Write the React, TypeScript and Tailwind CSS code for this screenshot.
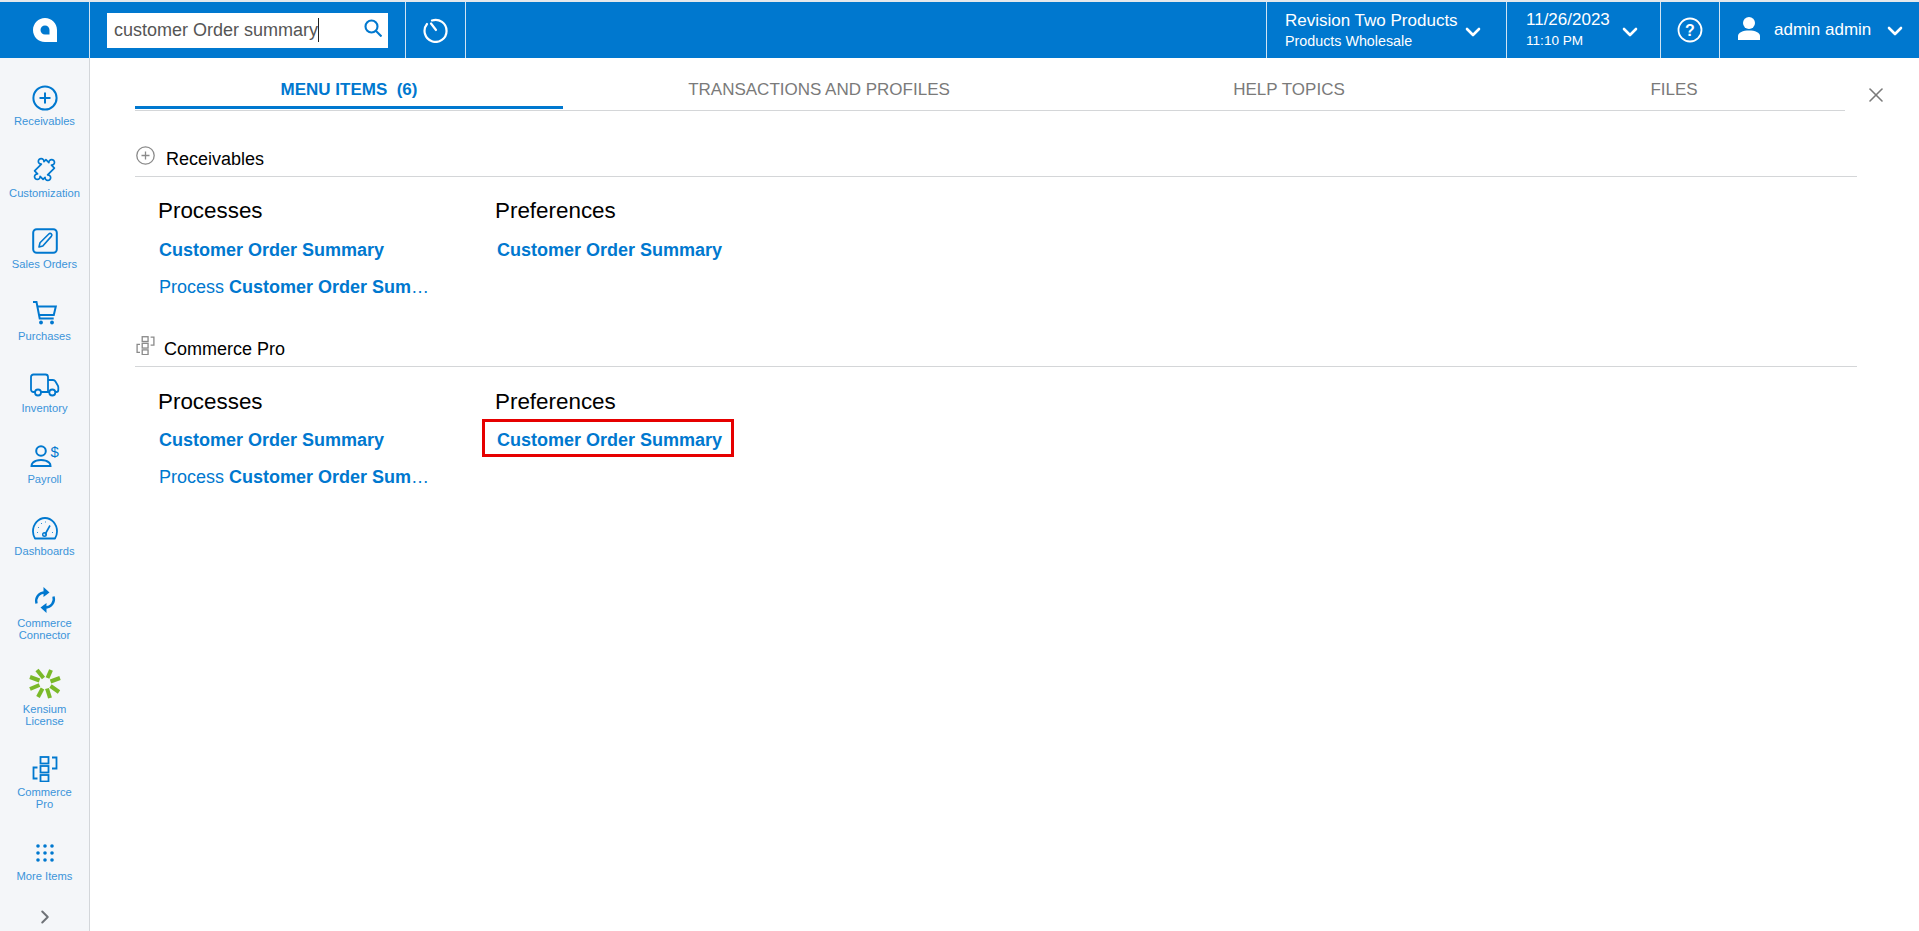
import { ChevronDown, ChevronRight, X } from 'lucide-react'
import type { ReactNode } from 'react'

const BLUE = '#0078cf'

function ReceivablesIcon() {
  return (
    <svg width="26" height="26" viewBox="0 0 26 26" fill="none" stroke={BLUE} strokeWidth="2">
      <circle cx="13" cy="13" r="11.6" />
      <path d="M13 7.5v11M7.5 13h11" />
    </svg>
  )
}

function PuzzleIcon() {
  return (
    <svg width="27" height="27" viewBox="-13.500 -13.500 27 27" fill="none" stroke={BLUE} strokeWidth="1.7" strokeLinejoin="round">
      <path
        transform="rotate(-45)"
        d="M-8-6H1.600a2.800 2.800 0 1 1 3.600 0H8V-1.800a2.800 2.800 0 1 1 0 3.600V6H-1.600a2.800 2.800 0 1 1-3.600 0H-8V1.800a2.800 2.800 0 1 1 0-3.600V-6Z"
      />
    </svg>
  )
}

function OrdersIcon() {
  return (
    <svg width="26" height="26" viewBox="0 0 26 26" fill="none" stroke={BLUE} strokeWidth="2" strokeLinejoin="round">
      <rect x="1.2" y="1.2" width="23.6" height="23.6" rx="3.5" />
      <path d="M7 19l1-4.2L16.8 6c.8-.8 1.8-.8 2.5-.1.8.8.7 1.8 0 2.5L10.8 18z" strokeWidth="1.6" />
    </svg>
  )
}

function CartIcon() {
  return (
    <svg width="26" height="26" viewBox="0 0 26 26" fill="none" stroke={BLUE} strokeWidth="2">
      <path d="M1 2h3.5l3.2 16.5h14" />
      <path d="M5.3 6.5h18.5l-2 8.5H7" />
      <circle cx="9" cy="22.5" r="1.9" fill={BLUE} stroke="none" />
      <circle cx="20" cy="22.5" r="1.9" fill={BLUE} stroke="none" />
    </svg>
  )
}

function TruckIcon() {
  return (
    <svg width="30" height="24" viewBox="0 0 30 24" fill="none" stroke={BLUE} strokeWidth="1.8" strokeLinejoin="round">
      <path d="M5 19H3.5C2 19 1 18 1 16.5V4C1 2.500 2 1.500 3.500 1.500H15.500C17 1.500 18 2.500 18 4V19H11" />
      <path d="M18 7h5c1 0 1.800.500 2.300 1.300l2.500 4.200c.300.600.500 1.100.500 1.800v2.700c0 1.200-.800 2-2 2H25M18 19h1.500" />
      <circle cx="8" cy="19.500" r="3" />
      <circle cx="22.300" cy="19.500" r="3" />
    </svg>
  )
}

function PayrollIcon() {
  return (
    <svg width="30" height="24" viewBox="0 0 30 24" fill="none" stroke={BLUE} strokeWidth="2">
      <circle cx="11" cy="7" r="4.800" />
      <path d="M1.500 22c0-1 .200-2.500 1.500-3.600C5 16.700 8 16 11 16s6 .700 8 2.400c1.300 1.100 1.500 2.600 1.500 3.600z" />
      <text x="20.500" y="13" fontSize="15" fill={BLUE} stroke="none" fontFamily="'Liberation Sans', sans-serif">$</text>
    </svg>
  )
}

function GaugeIcon() {
  return (
    <svg width="26" height="24" viewBox="0 0 26 24" fill="none" stroke={BLUE} strokeWidth="1.800">
      <path d="M3 22.500C1.700 20.500 1 18.500 1 15.500 1 8 6.500 2 13 2s12 6 12 13.500c0 3-.700 5-2 7z" strokeLinejoin="round" />
      <path d="M13 18.500 18 9.500" strokeWidth="1.600" />
      <circle cx="12.500" cy="18.500" r="1.800" strokeWidth="1.400" />
      <path d="M5 16.500h.8M6 11.500h.8M9 7.500h.8M13 6h.8M20 16.500h.8" strokeWidth="1.200" strokeDasharray="1 1" />
    </svg>
  )
}

function ConnectorIcon() {
  return (
    <svg width="22" height="28" viewBox="0 0 22 28" fill="none" stroke={BLUE} strokeWidth="2.400">
      <path d="M2.500 17.500C1 12 4.500 6.500 11 6.500" />
      <path d="M19.500 10.500C21 16 17.500 21.500 11 21.500" />
      <path d="M9.500 1 15.500 6.500 9.500 11z" fill={BLUE} stroke="none" />
      <path d="M12.500 17 6.500 21.500 12.500 27z" fill={BLUE} stroke="none" />
    </svg>
  )
}

function KensiumIcon() {
  return (
    <svg width="32" height="32" viewBox="-16 -16 32 32" fill="none" stroke="#7ab929" strokeWidth="4">
      <path d="M-8-13-1.500-5" />
      <path d="M6-13 2.500-5" />
      <path d="M15-5 5.500-1.500" />
      <path d="M14 9 5.500 3" />
      <path d="M5 15 2 5.500" />
      <path d="M-7 14-2.500 5.500" />
      <path d="M-15 6-5.500 2" />
      <path d="M-15-6-5.500-2.500" />
    </svg>
  )
}

function CommerceIcon({ color = BLUE, size = 26 }: { color?: string; size?: number }) {
  return (
    <svg width={size} height={size} viewBox="0 0 26 26" fill="none" stroke={color} strokeWidth="1.800">
      <rect x="8.500" y="1" width="8" height="6.500" />
      <rect x="8.500" y="10" width="8" height="6.500" />
      <rect x="8.500" y="19" width="8" height="6.500" />
      <path d="M20 1.500h4.500v11H20M5.500 11.500H1.500v11h4" />
    </svg>
  )
}

function DotsIcon() {
  const dots = [3, 10, 17]
  return (
    <svg width="20" height="20" viewBox="0 0 20 20" fill={BLUE}>
      {dots.map((y) =>
        dots.map((x) => <circle key={`${x}-${y}`} cx={x} cy={y} r="1.800" />)
      )}
    </svg>
  )
}

const NAV: { label: string[]; icon: ReactNode; h: string; gap: string }[] = [
  { label: ['Receivables'], icon: <ReceivablesIcon />, h: 'h-[71.7px]', gap: 'mt-[3px]' },
  { label: ['Customization'], icon: <PuzzleIcon />, h: 'h-[71.7px]', gap: 'mt-[3px]' },
  { label: ['Sales Orders'], icon: <OrdersIcon />, h: 'h-[71.7px]', gap: 'mt-[3px]' },
  { label: ['Purchases'], icon: <CartIcon />, h: 'h-[71.7px]', gap: 'mt-[3px]' },
  { label: ['Inventory'], icon: <TruckIcon />, h: 'h-[71.7px]', gap: 'mt-[3px]' },
  { label: ['Payroll'], icon: <PayrollIcon />, h: 'h-[71.7px]', gap: 'mt-[3px]' },
  { label: ['Dashboards'], icon: <GaugeIcon />, h: 'h-[71.7px]', gap: 'mt-[3px]' },
  { label: ['Commerce', 'Connector'], icon: <ConnectorIcon />, h: 'h-[83.5px]', gap: 'mt-[3px]' },
  { label: ['Kensium', 'License'], icon: <KensiumIcon />, h: 'h-[86px]', gap: 'mt-[6px]' },
  { label: ['Commerce', 'Pro'], icon: <CommerceIcon />, h: 'h-[84px]', gap: 'mt-[3px]' },
  { label: ['More Items'], icon: <DotsIcon />, h: 'h-[49px]', gap: 'mt-[3px]' },
]

function Sidebar() {
  return (
    <aside className="flex w-[90px] shrink-0 flex-col items-stretch border-r border-[#d3d6da] bg-[#f4f6f9] pt-[26px]">
      {NAV.map((item) => (
        <div key={item.label.join(' ')} className={`flex flex-col items-center ${item.h}`}>
          <div className="flex h-[28px] items-center justify-center">{item.icon}</div>
          <div className={`${item.gap} text-center text-[11.2px] leading-[12px] text-[#3b94d9]`}>
            {item.label.map((l) => (
              <div key={l}>{l}</div>
            ))}
          </div>
        </div>
      ))}
      <div className="flex justify-center pt-[18px]">
        <ChevronRight size={22} strokeWidth={2.200} className="text-[#6e7278]" />
      </div>
    </aside>
  )
}

function Header() {
  return (
    <header className="flex h-[58px] shrink-0 border-t-2 border-[#e4e8ec] bg-[#0078cf] text-white">
      <div className="flex w-[90px] items-center justify-center border-r border-[#cfe3f3]">
        <svg width="26" height="26" viewBox="0 0 26 26">
          <path
            fillRule="evenodd"
            fill="#fff"
            d="M13 1C19.500 1 25 6 25 13V25H13C6 25 1 19.500 1 13 1 6.500 6.500 1 13 1ZM13 8.500C10.500 8.500 8.500 10.500 8.500 13S10.500 17.500 13 17.500H17.500V13C17.500 10.500 15.500 8.500 13 8.500Z"
          />
        </svg>
      </div>
      <div className="flex w-[316px] items-center border-r border-[#cfe3f3] pl-[17px]">
        <div className="flex h-[35px] w-[281px] items-center justify-between bg-white pl-[7px] pr-[6px] text-[#555]">
          <span className="border-r border-[#222] text-[18px] leading-[24px]">customer Order summary</span>
          <svg width="18" height="18" viewBox="0 0 18 18" fill="none" stroke={BLUE} strokeWidth="2.100" className="mt-[-4px]">
            <circle cx="7.500" cy="7.500" r="6" />
            <path d="M11.800 11.800 17.500 17.500" />
          </svg>
        </div>
      </div>
      <div className="flex w-[60px] items-center justify-center border-r border-[#cfe3f3]">
        <svg width="26" height="26" viewBox="0 0 26 26" fill="none" stroke="#fff" strokeWidth="2.200">
          <path d="M9 3.500A11 11 0 1 1 4 7" strokeLinecap="round" />
          <path d="M13 13 8 6.500" strokeLinecap="round" />
        </svg>
      </div>
      <div className="flex-1" />
      <div className="flex w-[241px] items-center border-x border-[#cfe3f3] pl-[18px]">
        <div className="w-[176px]">
          <div className="text-[17px] leading-[22px]">Revision Two Products</div>
          <div className="mt-[-1px] text-[14.300px] leading-[20px]">Products Wholesale</div>
        </div>
        <ChevronDown size={24} strokeWidth={2.600} className="mt-[4px]" />
      </div>
      <div className="flex w-[154px] items-center border-r border-[#cfe3f3] pl-[19px]">
        <div className="w-[92px]">
          <div className="text-[17px] leading-[22px]">11/26/2023</div>
          <div className="text-[13.600px] leading-[20px]">11:10 PM</div>
        </div>
        <ChevronDown size={24} strokeWidth={2.600} className="mt-[4px]" />
      </div>
      <div className="flex w-[59px] items-center justify-center border-r border-[#cfe3f3]">
        <svg width="26" height="26" viewBox="0 0 26 26" fill="none" stroke="#fff" strokeWidth="1.800">
          <circle cx="13" cy="13" r="11.500" />
          <text x="13" y="18.500" textAnchor="middle" fontSize="16" fontWeight="700" fill="#fff" stroke="none" fontFamily="'Liberation Sans', sans-serif">?</text>
        </svg>
      </div>
      <div className="flex w-[199px] items-center pl-[17px]">
        <svg width="24" height="24" viewBox="0 0 24 24" fill="#fff" className="mt-[-4px]">
          <circle cx="12" cy="7" r="6" />
          <path d="M1 24v-4c0-3.500 5-5.500 11-5.500s11 2 11 5.500v4z" />
        </svg>
        <span className="ml-[13px] w-[109px] text-[17px]">admin admin</span>
        <ChevronDown size={24} strokeWidth={2.600} className="mt-[2px]" />
      </div>
    </header>
  )
}

const TABS = [
  { label: 'MENU ITEMS  (6)', w: 'w-[428px]', active: true },
  { label: 'TRANSACTIONS AND PROFILES', w: 'w-[512px]', active: false },
  { label: 'HELP TOPICS', w: 'w-[428px]', active: false },
  { label: 'FILES', w: 'w-[342px]', active: false },
]

function Tabs() {
  return (
    <div className="flex">
      <div className="flex w-[1710px] border-b border-[#d4d6d8] pb-px">
        {TABS.map((t) => (
          <div
            key={t.label}
            className={`flex h-[51px] items-center justify-center whitespace-pre border-b-[3px] pt-[16px] text-[17px] ${t.w} ${
              t.active ? 'border-[#0078cf] font-bold text-[#0078cf]' : 'border-transparent text-[#7a7a7a]'
            }`}
          >
            {t.label}
          </div>
        ))}
      </div>
      <div className="ml-[19px] pt-[25px]">
        <X size={24} strokeWidth={1.600} className="text-[#7a7a7a]" />
      </div>
    </div>
  )
}

function LinkText() {
  return <span className="font-bold">Customer Order Summary</span>
}

function Section({
  title,
  icon,
  top,
  gap,
  body,
  boxed,
}: {
  title: string
  icon: ReactNode
  top: string
  gap: string
  body: string
  boxed?: boolean
}) {
  return (
    <section className={top}>
      <div className="flex h-[36px] w-[1722px] items-center border-b border-[#d4d6d8] text-[18px] text-black">
        <div className="mt-[-6px] ml-px flex w-[20px] justify-start">{icon}</div>
        <span className={`${gap} pt-[2px]`}>{title}</span>
      </div>
      <div className={`flex pl-[23px] text-[18px] text-[#0078cf] ${body}`}>
        <div className="w-[337px]">
          <h3 className="h-[28px] text-[22.4px] leading-[28px] text-black">Processes</h3>
          <div className="ml-px mt-[6.500px] flex h-[37px] items-center">
            <LinkText />
          </div>
          <div className="ml-px flex h-[37px] w-[271px] items-center">
            <span className="truncate">
              Process <LinkText />
            </span>
          </div>
        </div>
        <div>
          <h3 className="h-[28px] text-[22.4px] leading-[28px] text-black">Preferences</h3>
          <div className="ml-[2px] mt-[6.500px] flex h-[37px] items-center">
            {boxed ? (
              <div className="-ml-[15px] -mt-[6px] flex h-[38px] items-center border-[3px] border-[#e60000] pl-[12px] pr-[9px] pt-[6px]">
                <LinkText />
              </div>
            ) : (
              <LinkText />
            )}
          </div>
        </div>
      </div>
    </section>
  )
}

export default function App() {
  return (
    <div className="flex h-[931px] w-[1919px] flex-col overflow-hidden bg-white font-['Liberation_Sans',Arial,sans-serif]">
      <Header />
      <div className="flex min-h-0 flex-1">
        <Sidebar />
        <main className="flex-1 pl-[45px]">
          <Tabs />
          <Section
            title="Receivables"
            top="mt-[30px]"
            gap="ml-[10px]"
            body="pt-[20px]"
            icon={
              <svg width="19" height="19" viewBox="0 0 19 19" fill="none" stroke="#8a8a8a" strokeWidth="1.300">
                <circle cx="9.500" cy="9.500" r="8.700" />
                <path d="M9.500 5.500v8M5.500 9.500h8" />
              </svg>
            }
          />
          <Section
            title="Commerce Pro"
            top="mt-[25px]"
            gap="ml-[8px]"
            body="pt-[21px]"
            boxed
            icon={<CommerceIcon color="#8a8a8a" size={19} />}
          />
        </main>
      </div>
    </div>
  )
}
